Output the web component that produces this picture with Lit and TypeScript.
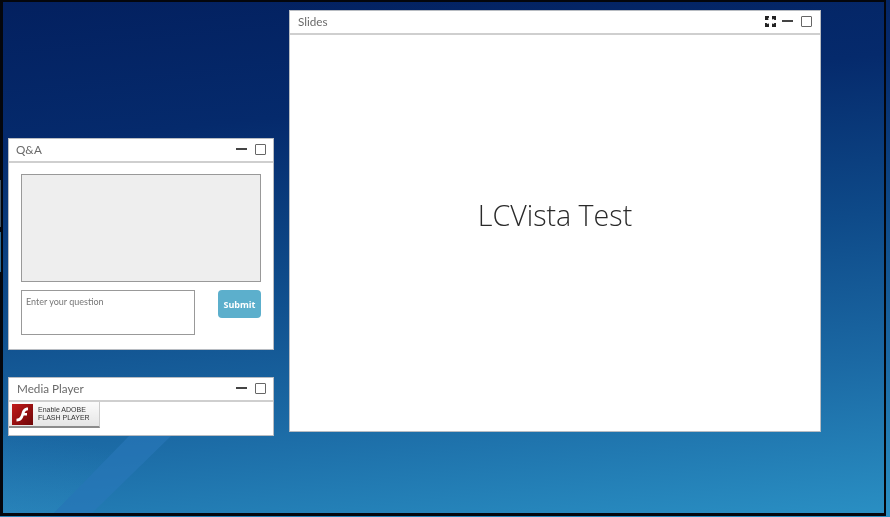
import { LitElement, html, css, svg } from "lit";
import { customElement } from "lit/decorators.js";

const fs = svg`<svg class="ic" width="11" height="11" viewBox="0 0 11 11"><path d="M0 0h4v1.500L2.800 3 4 4H0zM11 0v4H9.500L8 2.800 7 4V0zM0 11V7h1.500L3 8.200 4 7v4zM11 11H7V7l1 1.200L9.500 7H11z" fill="#222"/></svg>`;

@customElement("app-root")
export class AppRoot extends LitElement {
  static styles = css`
    :host { display: block; width: 890px; height: 517px; font-family: Lato, "Open Sans", sans-serif; }
    .desk { position: relative; width: 890px; height: 517px; overflow: hidden;
      background: linear-gradient(174deg, #03205f 0%, #052a6c 24%, #0e4a89 50%, #1b69a4 74%, #2a90c4 100%); }
    .streak { position: absolute; left: 0; top: 0; }
    .frame { position: absolute; left: 0; top: 0; right: 4px; bottom: 1px; border: solid #04060c; border-width: 2px 2px 3px 3px; }
    .strip { position: absolute; left: 0; width: 1px; }
    .s1 { top: 180px; height: 47px; background: #3f5568; }
    .s2 { top: 232px; height: 40px; background: #2a6a96; }
    .win { position: absolute; box-sizing: border-box; background: #fff; border: 1px solid #b8bcc2; display: flex; flex-direction: column; filter: blur(0.35px); }
    .qa { left: 8px; top: 138px; width: 266px; height: 212px; }
    .mp { left: 8px; top: 377px; width: 266px; height: 59px; }
    .sl { left: 289px; top: 10px; width: 532px; height: 422px; }
    .bar { flex: none; box-sizing: border-box; height: 24px; border-bottom: 2px solid #cfcfcf; display: flex; align-items: center; padding: 0 7px 0 7px; font-size: 11.700px; color: #6a6a6a; }
    .sl .bar, .mp .bar { padding-left: 8px; }
    .sl .bar { padding-right: 8px; }
    .bar span { flex: 1; padding-bottom: 2px; }
    .btns { display: flex; align-items: center; margin-top: -2px; }
    .min { width: 11px; height: 2px; background: #444; margin: 0 8px 0 6px; }
    .max { box-sizing: border-box; width: 11px; height: 11px; border: 1.500px solid #666; border-radius: 1px; }
    .qbody { flex: 1; padding: 11px 12px 0 12px; display: flex; flex-direction: column; gap: 8px; }
    .log { box-sizing: border-box; height: 108px; background: #eeeeee; border: 1px solid #999; }
    .row { display: flex; justify-content: space-between; align-items: flex-start; }
    .input { box-sizing: border-box; width: 174px; height: 45px; border: 1px solid #999; padding: 4px 4px; font-size: 9px; line-height: 13px; color: #777; }
    .submit { width: 43px; height: 28px; border-radius: 4px; background: #5cafcc; color: #fff; font-family: "Open Sans", sans-serif; font-size: 9px; font-weight: 700; display: flex; align-items: center; justify-content: center; }
    .flash { box-sizing: border-box; width: 91px; height: 26px; background: linear-gradient(#fbfbfb, #e6e6e6); border-bottom: 2px solid #8c8c8c; border-right: 1px solid #ccc; display: flex; align-items: center; gap: 5px; padding-left: 3px; }
    .logo { flex: none; width: 21px; height: 21px; background: linear-gradient(135deg, #c21a1a, #6e0608); display: flex; }
    .ft { font-family: "Liberation Sans", Arial, sans-serif; font-size: 7px; line-height: 8px; color: #333; }
    .slide { flex: 1; display: flex; align-items: center; justify-content: center; padding-bottom: 38px; font-family: "Open Sans", sans-serif; font-size: 28.600px; font-weight: 300; color: #2a2a2a; }
  `;
  render() {
    const ctl = html`<div class="min"></div><div class="max"></div>`;
    return html`<div class="desk">
      <svg class="streak" width="890" height="517" viewBox="0 0 890 517">
        <defs>
          <linearGradient id="glow" x1="0" y1="1" x2="0.4" y2="0">
            <stop offset="0" stop-color="#3a9ccf" stop-opacity=".3"/>
            <stop offset="1" stop-color="#3a9ccf" stop-opacity="0"/>
          </linearGradient>
        </defs>
        <path d="M0 517 L0 435 L130 435 L50 517Z" fill="url(#glow)"/>
        <path d="M130 435 L172 435 L88 517 L50 517Z" fill="#2a78ba" opacity=".6"/>
      </svg>
      <div class="frame"></div>
      <div class="strip s1"></div>
      <div class="strip s2"></div>
      <section class="win sl">
        <div class="bar"><span>Slides</span><div class="btns">${fs}${ctl}</div></div>
        <div class="slide">LCVista Test</div>
      </section>
      <section class="win qa">
        <div class="bar"><span>Q&amp;A</span><div class="btns">${ctl}</div></div>
        <div class="qbody">
          <div class="log"></div>
          <div class="row"><div class="input">Enter your question</div><div class="submit">Submit</div></div>
        </div>
      </section>
      <section class="win mp">
        <div class="bar"><span>Media Player</span><div class="btns">${ctl}</div></div>
        <div class="flash">
          <div class="logo"><svg width="21" height="21" viewBox="0 0 21 21"><path d="M16 3.500c-4 0-5.500 2.500-6.500 6-.8 2.800-1.800 5-5 5.300v2.700c4.600 0 6.300-3 7.200-6H15V9h-2.400c.5-1.500 1.500-2.700 3.400-2.800z" fill="#fff"/></svg></div>
          <div class="ft">Enable ADOBE<br/>FLASH PLAYER</div>
        </div>
      </section>
    </div>`;
  }
}
